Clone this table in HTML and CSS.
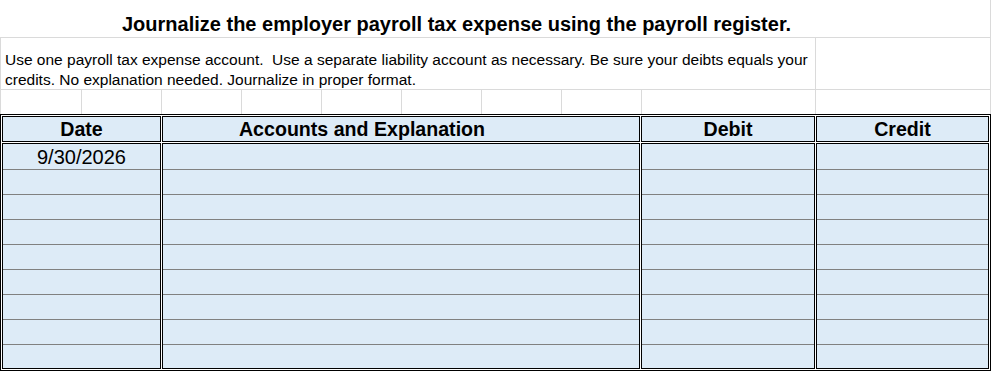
FILE: index.html
```html
<!DOCTYPE html>
<html lang="en">
<head>
<meta charset="utf-8">
<title>Payroll tax journal</title>
<link rel="stylesheet" href="styles.css">
</head>
<body>
<div class="sheet">
  <div class="title-row">
    <h1 class="title">Journalize the employer payroll tax expense using the payroll register.</h1>
  </div>
  <div class="instr-row">
    <div class="instr">Use one payroll tax expense account.&nbsp; Use a separate liability account as necessary. Be sure your deibts equals your<br>credits. No explanation needed. Journalize in proper format.</div>
    <div class="instr-side"></div>
  </div>
  <div class="blank-row">
    <div class="gcell first"></div>
    <div class="gcell"></div>
    <div class="gcell"></div>
    <div class="gcell"></div>
    <div class="gcell"></div>
    <div class="gcell"></div>
    <div class="gcell"></div>
    <div class="gcell"></div>
    <div class="gcell wide"></div>
    <div class="gcell wider"></div>
  </div>
  <div class="journal">
    <div class="head">Date</div>
    <div class="head head-accounts">Accounts and Explanation</div>
    <div class="head">Debit</div>
    <div class="head">Credit</div>

    <div class="col-body">
      <div class="jrow date-val">9/30/2026</div>
      <div class="jrow"></div><div class="jrow"></div><div class="jrow"></div><div class="jrow"></div>
      <div class="jrow"></div><div class="jrow"></div><div class="jrow"></div><div class="jrow"></div>
    </div>
    <div class="col-body">
      <div class="jrow"></div><div class="jrow"></div><div class="jrow"></div><div class="jrow"></div><div class="jrow"></div>
      <div class="jrow"></div><div class="jrow"></div><div class="jrow"></div><div class="jrow"></div>
    </div>
    <div class="col-body">
      <div class="jrow"></div><div class="jrow"></div><div class="jrow"></div><div class="jrow"></div><div class="jrow"></div>
      <div class="jrow"></div><div class="jrow"></div><div class="jrow"></div><div class="jrow"></div>
    </div>
    <div class="col-body">
      <div class="jrow"></div><div class="jrow"></div><div class="jrow"></div><div class="jrow"></div><div class="jrow"></div>
      <div class="jrow"></div><div class="jrow"></div><div class="jrow"></div><div class="jrow"></div>
    </div>
  </div>
</div>
</body>
</html>
```
FILE: styles.css
```css
html, body {
  margin: 0;
  padding: 0;
  background: #ffffff;
}

body {
  font-family: "Liberation Sans", Arial, sans-serif;
  color: #000000;
}

.sheet {
  width: 991px;
}

.title-row {
  width: 990px;
  height: 37px;
  border-bottom: 1px solid #dadada;
  border-right: 1px solid #dadada;
}

.title {
  margin: 0;
  padding: 13px 0 0 122px;
  font-size: 20px;
  line-height: 23px;
  font-weight: bold;
  white-space: nowrap;
}

.instr-row {
  display: flex;
  height: 52px;
  box-sizing: border-box;
  border-left: 1px solid #dadada;
  border-bottom: 1px solid #dadada;
}

.instr {
  width: 815px;
  box-sizing: border-box;
  border-right: 1px solid #dadada;
  padding: 12px 0 0 4px;
  font-size: 15.5px;
  line-height: 20px;
  white-space: nowrap;
}

.instr-side {
  width: 175px;
  box-sizing: border-box;
  border-right: 1px solid #dadada;
}

.blank-row {
  display: flex;
  height: 24px;
  border-left: 1px solid #dadada;
}

.gcell {
  width: 80px;
  box-sizing: border-box;
  border-right: 1px solid #dadada;
}

.gcell.first {
  width: 81px;
}

.gcell.wide {
  width: 174px;
}

.gcell.wider {
  width: 175px;
}

.journal {
  display: grid;
  grid-template-columns: 159px 478px 174px 173px;
  grid-template-rows: 26px 226px;
  gap: 1px;
  padding: 1px;
  border: 1px solid #000000;
  background: #ffffff;
  width: 991px;
  box-sizing: border-box;
}

.head {
  border: 1px solid #000000;
  background: #ddebf7;
  font-weight: bold;
  font-size: 19.6px;
  line-height: 25px;
  text-align: center;
  white-space: nowrap;
}

.head-accounts {
  padding-right: 78px;
}

.col-body {
  border: 1px solid #000000;
  background: #ddebf7;
  display: flex;
  flex-direction: column;
}

.jrow {
  height: 25px;
  flex: none;
  box-sizing: border-box;
  border-bottom: 1px solid #808080;
}

.jrow:first-child {
  height: 26px;
}

.jrow:last-child {
  flex: 1;
  border-bottom: none;
}

.date-val {
  font-size: 20px;
  line-height: 26px;
  text-align: center;
}
```
